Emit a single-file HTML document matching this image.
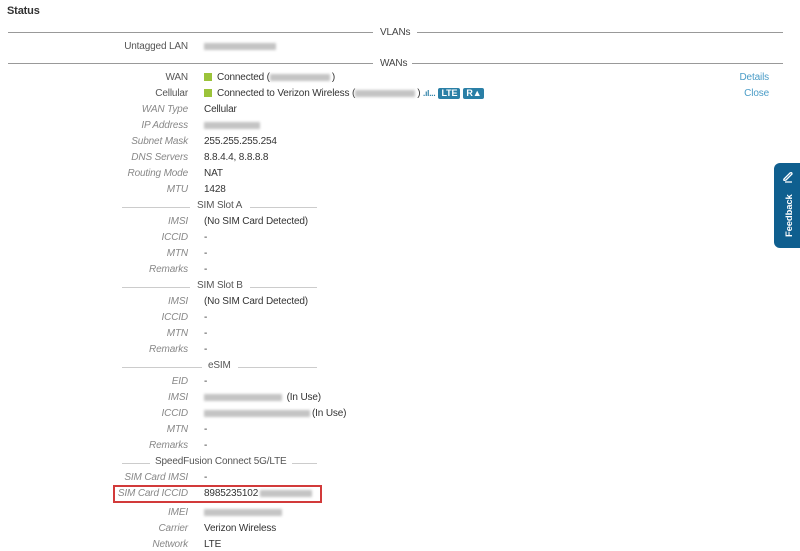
<!DOCTYPE html>
<html><head><style>
*{margin:0;padding:0;box-sizing:border-box}
body{width:800px;height:544px;background:#fff;position:relative;overflow:hidden;font-family:"Liberation Sans",Arial,sans-serif;font-size:10px;letter-spacing:-0.15px;color:#333}
.t{position:absolute;white-space:nowrap;line-height:12px}
.l{position:absolute;right:612px;white-space:nowrap;line-height:12px;color:#555;text-align:right}
.i{font-style:italic;color:#888}
.v{position:absolute;left:204px;white-space:nowrap;line-height:12px;color:#333}
.hr{position:absolute;height:1px;background:#999}
.sh{position:absolute;height:1px;background:#ccc}
.b{display:inline-block;height:7px;background:#c4c4c4;filter:blur(1.2px);vertical-align:middle;margin-right:2px}
.sq{display:inline-block;width:8px;height:8px;background:#9bc33a;vertical-align:-1px;margin-right:5px}
.badge{display:inline-block;background:#2a7fa6;color:#fff;font-weight:bold;font-size:9px;line-height:11px;padding:0 3px;border-radius:2px;margin-left:3px}
a{color:#4a9cc7;text-decoration:none}
</style></head><body>
<div class="t" style="left:7px;top:5px;font-weight:bold;font-size:11px;color:#333">Status</div>

<div class="hr" style="left:8px;top:32px;width:365px"></div>
<div class="t" style="left:380px;top:27px;color:#444">VLANs</div>
<div class="hr" style="left:417px;top:32px;width:366px"></div>
<div class="l" style="top:41px">Untagged LAN</div>
<div class="v" style="top:41px"><span class="b" style="width:72px"></span></div>

<div class="hr" style="left:8px;top:63px;width:365px"></div>
<div class="t" style="left:380px;top:58px;color:#444">WANs</div>
<div class="hr" style="left:412px;top:63px;width:371px"></div>

<div class="l" style="top:72px">WAN</div>
<div class="v" style="top:72px"><span class="sq"></span>Connected (<span class="b" style="width:60px"></span>)</div>
<div class="t" style="right:31px;top:72px"><a>Details</a></div>
<div class="l" style="top:88px">Cellular</div>
<div class="v" style="top:88px"><span class="sq"></span>Connected to Verizon Wireless (<span class="b" style="width:60px"></span>) <span style="color:#2a7fa6;font-size:8px;font-weight:bold">.ıl...</span><span class="badge">LTE</span><span class="badge">R▲</span></div>
<div class="t" style="right:31px;top:88px"><a>Close</a></div>

<div class="l i" style="top:104px">WAN Type</div><div class="v" style="top:104px">Cellular</div>
<div class="l i" style="top:120px">IP Address</div><div class="v" style="top:120px"><span class="b" style="width:56px"></span></div>
<div class="l i" style="top:136px">Subnet Mask</div><div class="v" style="top:136px">255.255.255.254</div>
<div class="l i" style="top:152px">DNS Servers</div><div class="v" style="top:152px">8.8.4.4, 8.8.8.8</div>
<div class="l i" style="top:168px">Routing Mode</div><div class="v" style="top:168px">NAT</div>
<div class="l i" style="top:184px">MTU</div><div class="v" style="top:184px">1428</div>

<div class="sh" style="left:122px;top:207px;width:68px"></div><div class="t" style="left:197px;top:200px;color:#555">SIM Slot A</div><div class="sh" style="left:250px;top:207px;width:67px"></div>
<div class="l i" style="top:216px">IMSI</div><div class="v" style="top:216px">(No SIM Card Detected)</div>
<div class="l i" style="top:232px">ICCID</div><div class="v" style="top:232px">-</div>
<div class="l i" style="top:248px">MTN</div><div class="v" style="top:248px">-</div>
<div class="l i" style="top:264px">Remarks</div><div class="v" style="top:264px">-</div>

<div class="sh" style="left:122px;top:287px;width:68px"></div><div class="t" style="left:197px;top:280px;color:#555">SIM Slot B</div><div class="sh" style="left:250px;top:287px;width:67px"></div>
<div class="l i" style="top:296px">IMSI</div><div class="v" style="top:296px">(No SIM Card Detected)</div>
<div class="l i" style="top:312px">ICCID</div><div class="v" style="top:312px">-</div>
<div class="l i" style="top:328px">MTN</div><div class="v" style="top:328px">-</div>
<div class="l i" style="top:344px">Remarks</div><div class="v" style="top:344px">-</div>

<div class="sh" style="left:122px;top:367px;width:80px"></div><div class="t" style="left:208px;top:360px;color:#555">eSIM</div><div class="sh" style="left:238px;top:367px;width:79px"></div>
<div class="l i" style="top:376px">EID</div><div class="v" style="top:376px">-</div>
<div class="l i" style="top:392px">IMSI</div><div class="v" style="top:392px"><span class="b" style="width:78px"></span> (In Use)</div>
<div class="l i" style="top:408px">ICCID</div><div class="v" style="top:408px"><span class="b" style="width:106px"></span>(In Use)</div>
<div class="l i" style="top:424px">MTN</div><div class="v" style="top:424px">-</div>
<div class="l i" style="top:440px">Remarks</div><div class="v" style="top:440px">-</div>

<div class="sh" style="left:122px;top:463px;width:28px"></div><div class="t" style="left:155px;top:456px;color:#555">SpeedFusion Connect 5G/LTE</div><div class="sh" style="left:292px;top:463px;width:25px"></div>
<div class="l i" style="top:472px">SIM Card IMSI</div><div class="v" style="top:472px">-</div>
<div style="position:absolute;left:113px;top:485px;width:209px;height:18px;border:2px solid #d23a3a"></div>
<div class="l i" style="top:488px">SIM Card ICCID</div><div class="v" style="top:488px">8985235102<span class="b" style="width:52px;margin-left:2px"></span></div>
<div class="l i" style="top:507px">IMEI</div><div class="v" style="top:507px"><span class="b" style="width:78px"></span></div>
<div class="l i" style="top:523px">Carrier</div><div class="v" style="top:523px">Verizon Wireless</div>
<div class="l i" style="top:539px">Network</div><div class="v" style="top:539px">LTE</div>

<div style="position:absolute;left:774px;top:163px;width:30px;height:85px;background:#0f5f8f;border-radius:6px 0 0 6px"></div>
<svg style="position:absolute;left:781px;top:170px" width="14" height="14" viewBox="0 0 14 14"><path d="M3 9 L9 3 Q11 2 11 4 L5 10 Q2 11 3 9 Z M4 12 H11" stroke="#fff" stroke-width="1.3" fill="none"/></svg>
<div class="t" style="left:770px;top:211px;transform:rotate(-90deg);transform-origin:center;width:40px;text-align:center;color:#fff;font-weight:bold;font-size:9.5px">Feedback</div>
</body></html>
